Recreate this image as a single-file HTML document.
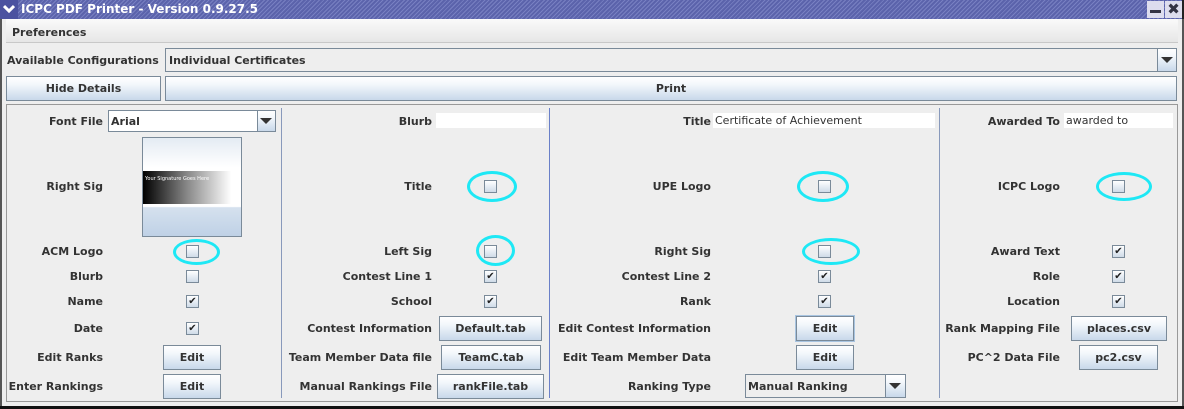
<!DOCTYPE html><html><head><style>
*{margin:0;padding:0;box-sizing:border-box}
body{width:1184px;height:409px;background:#eee;position:relative;overflow:hidden;font-family:"DejaVu Sans","Liberation Sans",sans-serif;font-size:11px;font-weight:bold;color:#333}
.a{position:absolute}
.l{position:absolute;white-space:nowrap;text-align:right;line-height:14px;margin-top:1px}
.cb{position:absolute;width:13px;height:13px;border:1px solid #7a8a99;background:linear-gradient(#fff,#cfdbe8);font-size:10px;line-height:11px;text-align:center;color:#222}
.bt{position:absolute;border:1px solid #7a8a99;background:linear-gradient(#fff 0%,#f4f8fc 30%,#c8d8ea 100%);text-align:center;line-height:23px;white-space:nowrap}
.el{position:absolute;border:3px solid #1ee8f5;border-radius:50%}
.tf{position:absolute;background:#fff;font-weight:normal;line-height:15px;padding-left:2px}
.arr{position:absolute;width:0;height:0;border-left:6px solid transparent;border-right:6px solid transparent;border-top:6px solid #333}
</style></head><body>
<div class="a" style="left:0;top:0;width:1184px;height:409px;background:#222"></div>
<div class="a" style="left:2px;top:0;width:1180px;height:19px;background:repeating-linear-gradient(135deg,#5b63ab 0 2px,#7880c2 2px 3px)"></div>
<div class="a" style="left:0;top:0;width:18px;height:19px;background:#4b52a0"></div>
<svg class="a" style="left:3px;top:4px" width="12" height="10"><path d="M1 2 L6 7 L11 2" stroke="#fff" stroke-width="3" fill="none"/></svg>
<div class="a" style="left:21px;top:2px;color:#fff;font-size:12px;line-height:15px">ICPC PDF Printer - Version 0.9.27.5</div>
<div class="a" style="left:1147px;top:1px;width:17px;height:17px;background:#dde"></div>
<div class="a" style="left:1150px;top:10px;width:11px;height:3px;background:#334"></div>
<div class="a" style="left:1165px;top:1px;width:17px;height:17px;background:#dde;font-size:15px;line-height:17px;text-align:center;color:#334">&#10006;</div>
<div class="a" style="left:6px;top:19px;width:1172px;height:387px;background:#eee"></div>
<div class="a" style="left:0;top:19px;width:6px;height:390px;background:#eee;border-left:2px solid #555"></div>
<div class="a" style="left:1178px;top:19px;width:6px;height:390px;background:#eee;border-right:2px solid #555"></div>
<div class="a" style="left:6px;top:19px;width:1172px;height:24px;background:linear-gradient(#fafafa,#e6e6e6);border-bottom:1px solid #c8c8c8"></div>
<div class="a" style="left:12px;top:26px;line-height:14px">Preferences</div>
<div class="a" style="left:7px;top:54px;line-height:14px">Available Configurations</div>
<div class="a" style="left:165px;top:48px;width:1012px;height:24px;border:1px solid #7a8a99;background:#eee"></div>
<div class="a" style="left:169px;top:54px;line-height:14px">Individual Certificates</div>
<div class="bt" style="left:1157px;top:48px;width:20px;height:24px"></div>
<div class="arr" style="left:1161px;top:57px"></div>
<div class="bt" style="left:6px;top:76px;width:155px;height:25px">Hide Details</div>
<div class="bt" style="left:165px;top:76px;width:1012px;height:25px">Print</div>
<div class="a" style="left:6px;top:104px;width:1172px;height:298px;border:1px solid #999"></div>
<div class="a" style="left:281px;top:108px;width:1px;height:290px;background:#8899bb"></div>
<div class="a" style="left:549px;top:108px;width:1px;height:290px;background:#6a80c8"></div>
<div class="a" style="left:939px;top:108px;width:1px;height:290px;background:#8899bb"></div>

<!-- col1 -->
<div class="l" style="right:1081px;top:114px">Font File</div>
<div class="a" style="left:108px;top:110px;width:168px;height:22px;border:1px solid #7a8a99;background:#fff"></div>
<div class="a" style="left:111px;top:115px;line-height:14px">Arial</div>
<div class="bt" style="left:257px;top:110px;width:19px;height:22px"></div>
<div class="arr" style="left:260px;top:118px"></div>
<div class="l" style="right:1081px;top:179px">Right Sig</div>
<div class="a" style="left:142px;top:137px;width:100px;height:100px;border:1px solid #7a8a99;background:linear-gradient(#e4ebf3,#fff 30%,#fff 31%,#fff 70%,#d5e1ee 71%,#bfd1e6)"></div>
<div class="a" style="left:143px;top:171px;width:98px;height:33px;background:linear-gradient(90deg,#000 0%,#888 45%,#fff 90%)"></div>
<div class="a" style="left:145px;top:176px;font-size:5px;color:#fff;font-weight:normal">Your Signature Goes Here</div>
<div class="l" style="right:1081px;top:244px">ACM Logo</div>
<div class="el" style="left:173px;top:239px;width:47px;height:26px"></div><div class="cb" style="left:186px;top:245px"></div>
<div class="l" style="right:1081px;top:269px">Blurb</div><div class="cb" style="left:186px;top:270px"></div>
<div class="l" style="right:1081px;top:294px">Name</div><div class="cb" style="left:186px;top:295px">&#10004;</div>
<div class="l" style="right:1081px;top:321px">Date</div><div class="cb" style="left:186px;top:322px">&#10004;</div>
<div class="l" style="right:1081px;top:350px">Edit Ranks</div><div class="bt" style="left:163px;top:345px;width:58px;height:25px">Edit</div>
<div class="l" style="right:1081px;top:379px">Enter Rankings</div><div class="bt" style="left:163px;top:374px;width:58px;height:25px">Edit</div>

<!-- col2 -->
<div class="l" style="right:752px;top:114px">Blurb</div>
<div class="tf" style="left:436px;top:113px;width:110px;height:15px"></div>
<div class="l" style="right:752px;top:179px">Title</div>
<div class="el" style="left:467px;top:171px;width:50px;height:31px"></div><div class="cb" style="left:484px;top:180px"></div>
<div class="l" style="right:752px;top:244px">Left Sig</div>
<div class="el" style="left:476px;top:235px;width:39px;height:31px"></div><div class="cb" style="left:484px;top:245px"></div>
<div class="l" style="right:752px;top:269px">Contest Line 1</div><div class="cb" style="left:484px;top:270px">&#10004;</div>
<div class="l" style="right:752px;top:294px">School</div><div class="cb" style="left:484px;top:295px">&#10004;</div>
<div class="l" style="right:752px;top:321px">Contest Information</div><div class="bt" style="left:439px;top:316px;width:103px;height:25px">Default.tab</div>
<div class="l" style="right:752px;top:350px">Team Member Data file</div><div class="bt" style="left:441px;top:345px;width:100px;height:25px">TeamC.tab</div>
<div class="l" style="right:752px;top:379px">Manual Rankings File</div><div class="bt" style="left:437px;top:374px;width:107px;height:25px">rankFile.tab</div>

<!-- col3 -->
<div class="l" style="right:473px;top:114px">Title</div>
<div class="tf" style="left:713px;top:113px;width:222px;height:15px">Certificate of Achievement</div>
<div class="l" style="right:473px;top:179px">UPE Logo</div>
<div class="el" style="left:797px;top:171px;width:52px;height:31px"></div><div class="cb" style="left:818px;top:180px"></div>
<div class="l" style="right:473px;top:244px">Right Sig</div>
<div class="el" style="left:802px;top:238px;width:58px;height:27px"></div><div class="cb" style="left:818px;top:245px"></div>
<div class="l" style="right:473px;top:269px">Contest Line 2</div><div class="cb" style="left:818px;top:270px">&#10004;</div>
<div class="l" style="right:473px;top:294px">Rank</div><div class="cb" style="left:818px;top:295px">&#10004;</div>
<div class="l" style="right:473px;top:321px">Edit Contest Information</div><div class="bt" style="left:796px;top:316px;width:58px;height:25px;box-shadow:0 0 0 1px #a8c4e0">Edit</div>
<div class="l" style="right:473px;top:350px">Edit Team Member Data</div><div class="bt" style="left:796px;top:345px;width:58px;height:25px">Edit</div>
<div class="l" style="right:473px;top:379px">Ranking Type</div>
<div class="a" style="left:745px;top:374px;width:161px;height:24px;border:1px solid #7a8a99;background:#eee"></div>
<div class="a" style="left:748px;top:380px;line-height:14px">Manual Ranking</div>
<div class="bt" style="left:885px;top:374px;width:21px;height:24px"></div><div class="arr" style="left:889px;top:383px"></div>

<!-- col4 -->
<div class="l" style="right:124px;top:114px">Awarded To</div>
<div class="tf" style="left:1064px;top:113px;width:109px;height:15px">awarded to</div>
<div class="l" style="right:124px;top:179px">ICPC Logo</div>
<div class="el" style="left:1096px;top:172px;width:56px;height:29px"></div><div class="cb" style="left:1112px;top:180px"></div>
<div class="l" style="right:124px;top:244px">Award Text</div><div class="cb" style="left:1112px;top:245px">&#10004;</div>
<div class="l" style="right:124px;top:269px">Role</div><div class="cb" style="left:1112px;top:270px">&#10004;</div>
<div class="l" style="right:124px;top:294px">Location</div><div class="cb" style="left:1112px;top:295px">&#10004;</div>
<div class="l" style="right:124px;top:321px">Rank Mapping File</div><div class="bt" style="left:1071px;top:316px;width:96px;height:25px">places.csv</div>
<div class="l" style="right:124px;top:350px">PC^2 Data File</div><div class="bt" style="left:1079px;top:345px;width:79px;height:25px">pc2.csv</div>
<div class="a" style="left:0;top:406px;width:1184px;height:3px;background:#111"></div>
</body></html>
